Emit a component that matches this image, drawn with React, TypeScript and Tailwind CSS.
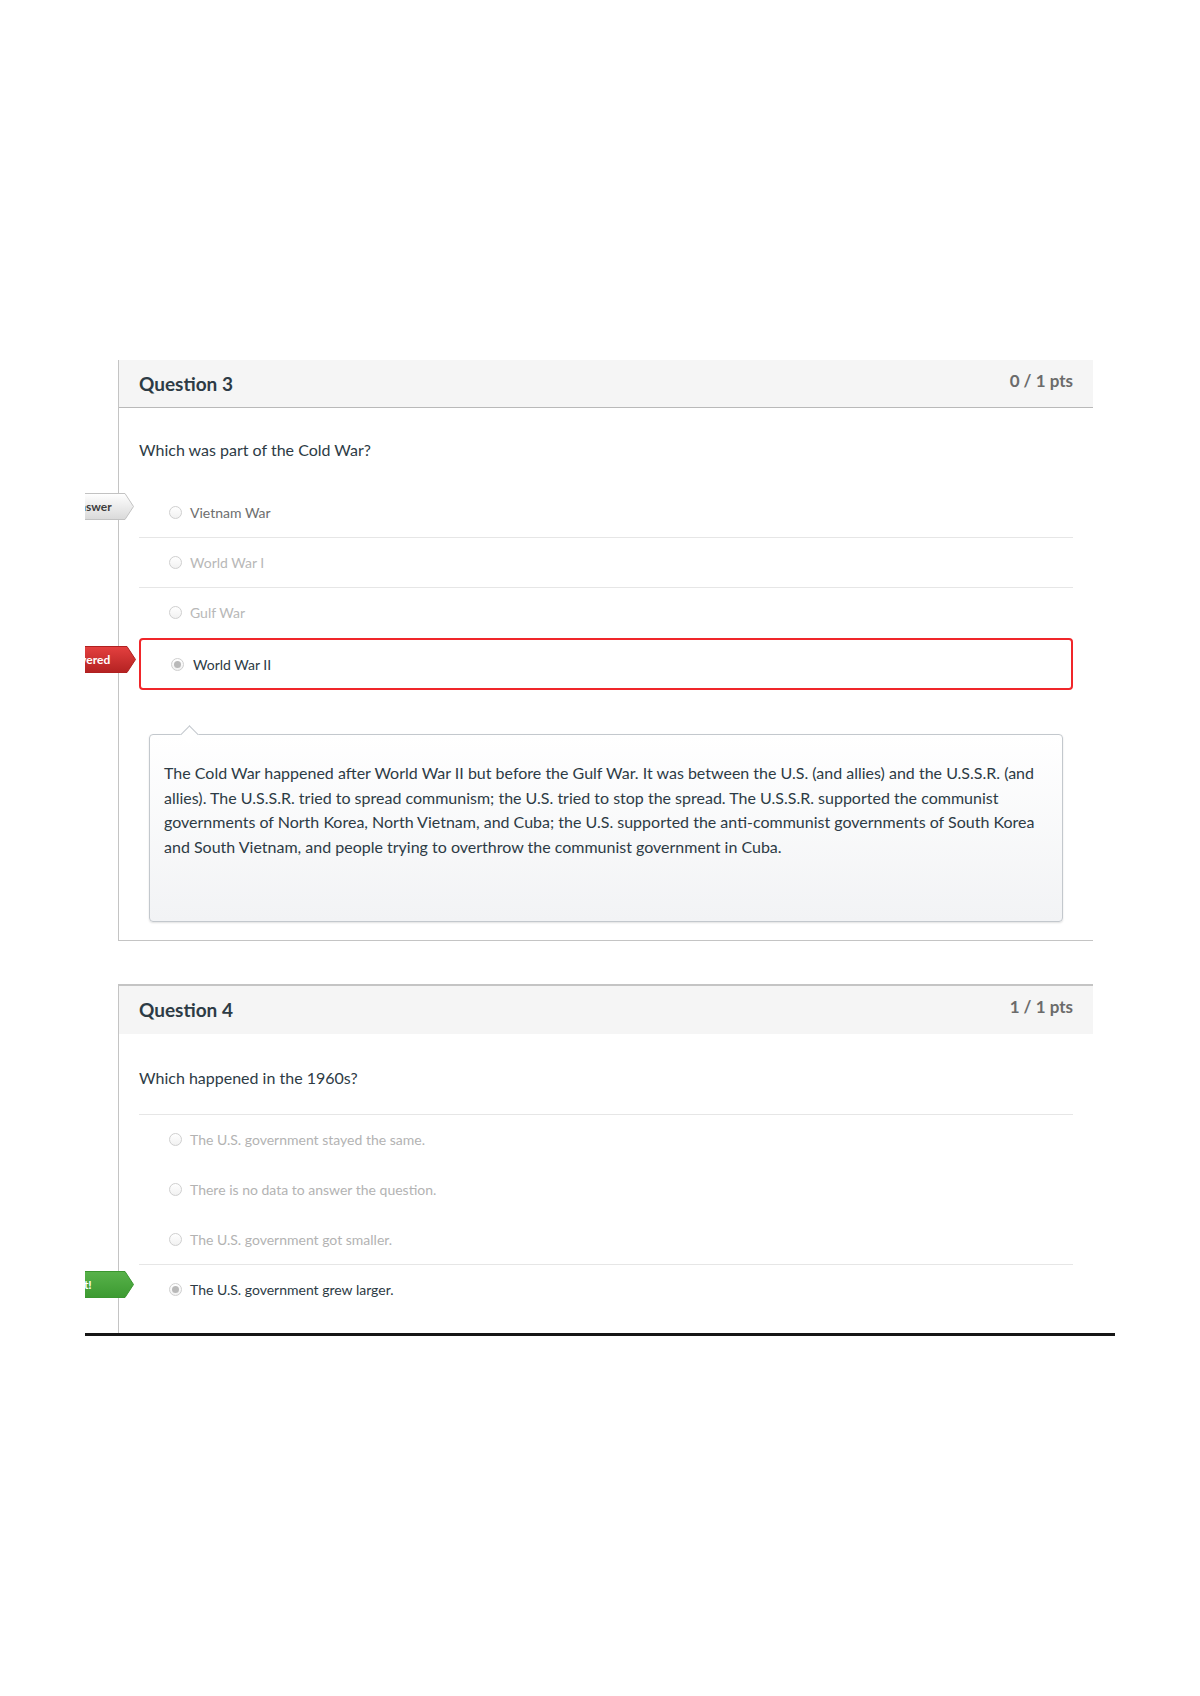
import React from "react";

type Tone = "gray" | "red" | "green";

const TAG_FILL: Record<Tone, { from: string; to: string; stroke: string; text: string }> = {
  gray: { from: "#ffffff", to: "#d9d9d9", stroke: "#c2c2c2", text: "text-[#3d3d3d]" },
  red: { from: "#e4403f", to: "#b42222", stroke: "#b02020", text: "text-white" },
  green: { from: "#58b24a", to: "#3c9a31", stroke: "#3a962f", text: "text-white" },
};

function Tag({ label, tone }: { label: string; tone: Tone }) {
  const c = TAG_FILL[tone];
  return (
    <div className="absolute left-[-124px] top-[6px] h-[27px] w-[119px]">
      <svg width="119" height="27" className="absolute inset-0">
        <defs>
          <linearGradient id={`tag-${tone}`} x1="0" y1="0" x2="0" y2="1">
            <stop offset="0" stopColor={c.from} />
            <stop offset="1" stopColor={c.to} />
          </linearGradient>
        </defs>
        <polygon points="0.5,0.5 110,0.5 118.5,13.5 110,26.5 0.5,26.5" fill={`url(#tag-${tone})`} stroke={c.stroke} />
      </svg>
      <div className={`relative flex h-full w-[110px] items-center justify-center text-[12px] font-bold ${c.text}`}>{label}</div>
    </div>
  );
}

function Radio({ checked }: { checked?: boolean }) {
  return (
    <span className="flex h-[13px] w-[13px] shrink-0 items-center justify-center rounded-full border border-[#cfcfcf] bg-gradient-to-b from-white to-[#f1f1f1]">
      {checked && <span className="h-[7px] w-[7px] rounded-full bg-[#b9b9b9]" />}
    </span>
  );
}

type Ans = {
  text: string;
  color: string;
  checked?: boolean;
  tag?: { label: string; tone: Tone };
  borderTop?: boolean;
  wrong?: boolean;
};

function AnswerRow({ a }: { a: Ans }) {
  if (a.wrong) {
    return (
      <div className="relative mt-[1px] flex h-[52px] items-center rounded-[4px] border-2 border-[#f0262a] pl-[30px]">
        {a.tag && <Tag label={a.tag.label} tone={a.tag.tone} />}
        <Radio checked={a.checked} />
        <span className={`ml-[9px] text-[14px] ${a.color}`}>{a.text}</span>
      </div>
    );
  }
  return (
    <div className={`relative flex h-[50px] items-center pl-[30px] ${a.borderTop ? "border-t border-[#e6e6e6]" : ""}`}>
      {a.tag && <Tag label={a.tag.label} tone={a.tag.tone} />}
      <Radio checked={a.checked} />
      <span className={`ml-[8px] text-[14px] ${a.color}`}>{a.text}</span>
    </div>
  );
}

function Header({ title, pts, bottomBorder }: { title: string; pts: string; bottomBorder?: boolean }) {
  return (
    <div className={`flex h-[48px] items-start justify-between bg-[#f5f5f5] px-5 ${bottomBorder ? "border-b border-[#b9b9b9]" : ""}`}>
      <h2 className="pt-[13px] text-[19px] font-bold leading-[22px] text-[#2d3b45]">{title}</h2>
      <span className="pt-[11px] text-[17px] font-bold leading-[20px] text-[#6b6b6b]">{pts}</span>
    </div>
  );
}

const FEEDBACK = [
  "The Cold War happened after World War II but before the Gulf War. It was between the U.S. (and allies) and the U.S.S.R. (and",
  "allies). The U.S.S.R. tried to spread communism; the U.S. tried to stop the spread. The U.S.S.R. supported the communist",
  "governments of North Korea, North Vietnam, and Cuba; the U.S. supported the anti-communist governments of South Korea",
  "and South Vietnam, and people trying to overthrow the communist government in Cuba.",
];

const Q3: Ans[] = [
  { text: "Vietnam War", color: "text-[#6e6e6e]", tag: { label: "Correct Answer", tone: "gray" } },
  { text: "World War I", color: "text-[#b8b8b8]", borderTop: true },
  { text: "Gulf War", color: "text-[#b8b8b8]", borderTop: true },
  { text: "World War II", color: "text-[#2d3b45]", checked: true, wrong: true, tag: { label: "You Answered", tone: "red" } },
];

const Q4: Ans[] = [
  { text: "The U.S. government stayed the same.", color: "text-[#b3b3b3]", borderTop: true },
  { text: "There is no data to answer the question.", color: "text-[#b3b3b3]" },
  { text: "The U.S. government got smaller.", color: "text-[#b3b3b3]" },
  { text: "The U.S. government grew larger.", color: "text-[#2d3b45]", checked: true, borderTop: true, tag: { label: "Correct!", tone: "green" } },
];

export default function App() {
  return (
    <div className="h-[1696px] w-[1200px] bg-white font-['Lato','Liberation_Sans',sans-serif]">
      <div className="ml-[85px] w-[1030px] overflow-hidden border-b-[3px] border-[#161616] pt-[360px]">
        {/* Question 3 */}
        <section className="ml-[33px] w-[975px] border-b border-l border-[#c4c4c4]">
          <Header title="Question 3" pts="0 / 1 pts" bottomBorder />
          <div className="px-5 pb-[18px]">
            <p className="h-[79px] pt-[32px] text-[16px] leading-[20px] text-[#2d3b45]">Which was part of the Cold War?</p>
            {Q3.map((a) => (
              <AnswerRow key={a.text} a={a} />
            ))}
            <div className="relative mx-[10px] mt-[44px] h-[188px] rounded-[4px] border border-[#c3c8cd] bg-gradient-to-b from-white to-[#f2f3f5] px-[14px] pt-[26px] shadow-[0_1px_2px_rgba(0,0,0,0.12)]">
              <span className="absolute left-[33px] top-[-7px] h-[13px] w-[13px] rotate-45 border-l border-t border-[#c3c8cd] bg-white" />
              {FEEDBACK.map((line) => (
                <div key={line} className="whitespace-nowrap text-[16px] leading-[24.5px] text-[#2d3b45]">
                  {line}
                </div>
              ))}
            </div>
          </div>
        </section>

        {/* Question 4 */}
        <section className="ml-[33px] mt-[43px] w-[975px] border-l border-t-2 border-[#c4c4c4]">
          <Header title="Question 4" pts="1 / 1 pts" />
          <div className="px-5 pb-[19px]">
            <p className="h-[80px] pt-[34px] text-[16px] leading-[20px] text-[#2d3b45]">Which happened in the 1960s?</p>
            {Q4.map((a) => (
              <AnswerRow key={a.text} a={a} />
            ))}
          </div>
        </section>
      </div>
    </div>
  );
}
